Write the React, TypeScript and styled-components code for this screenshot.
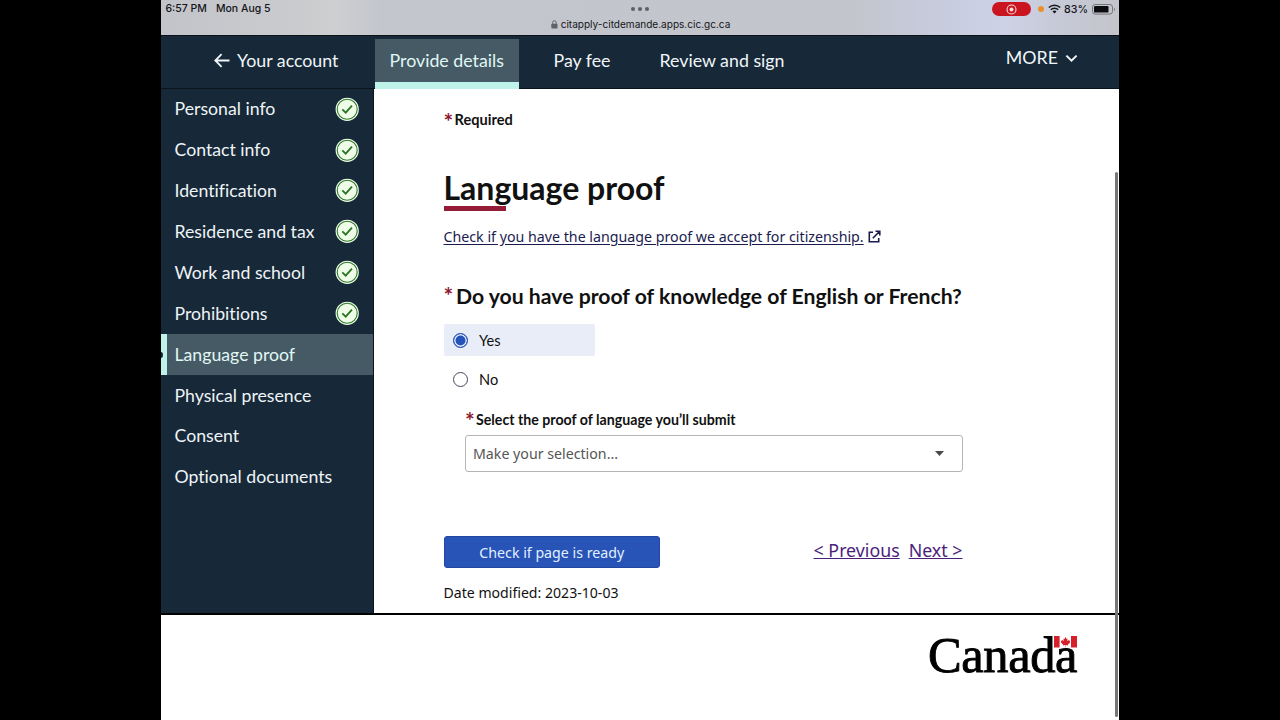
import { useState } from "react";
import styled, { createGlobalStyle } from "styled-components";

const GlobalStyle = createGlobalStyle`
  * {
    box-sizing: border-box;
  }
  body {
    margin: 0;
    background: #000;
    overflow: hidden;
  }
  a {
    color: inherit;
  }
`;

const Screen = styled.div`
  position: relative;
  width: 958px;
  height: 720px;
  margin-left: 161px;
  background: #fff;
  display: flex;
  flex-direction: column;
  overflow: hidden;
  font-family: "Noto Sans", sans-serif;
  color: #111;
`;

const StatusBar = styled.header`
  height: 36px;
  flex: none;
  display: grid;
  grid-template-columns: 1fr auto 1fr;
  background: linear-gradient(90deg, #c3c4c9 0%, #c9cbce 14%, #cdcfd0 18%, #c4c6cd 23%, #c3c5cd 72%, #c8cde0 83%, #cdd2e6 88%, #c6c9d6 94%, #c4c5cb 100%);
  border-bottom: 1px solid #0c1218;
  font-family: Inter, sans-serif;
  color: #15161a;
`;

const Clock = styled.div`
  display: flex;
  gap: 9px;
  padding: 2px 0 0 4.5px;
  font-size: 10.5px;
  line-height: 14px;
  font-weight: 500;
  white-space: nowrap;
`;

const Address = styled.div`
  display: flex;
  flex-direction: column;
  align-items: center;
`;

const Dots = styled.div`
  display: flex;
  gap: 3px;
  height: 16px;
  padding-top: 7px;

  i {
    width: 4px;
    height: 4px;
    border-radius: 50%;
    background: #5e6066;
  }
`;

const Url = styled.div`
  display: flex;
  align-items: center;
  gap: 3px;
  height: 16px;
  padding-left: 1px;
  font-size: 10.05px;
  white-space: nowrap;
`;

const Indicators = styled.div`
  display: flex;
  justify-content: flex-end;
  align-items: center;
  height: 18px;
  padding-right: 3px;
  font-size: 10.7px;
  font-weight: 500;
`;

const RecordPill = styled.span`
  width: 39px;
  height: 14px;
  margin-right: 7px;
  border-radius: 7px;
  background: #ca1420;
  display: flex;
  align-items: center;
  justify-content: center;
`;

const MicDot = styled.span`
  width: 6px;
  height: 6px;
  margin-right: 4px;
  border-radius: 50%;
  background: #e8912d;
`;

const Percent = styled.span`
  margin: 0 4px 0 3px;
`;

const NavBar = styled.nav`
  height: 53px;
  flex: none;
  display: flex;
  background: #172838;
  border-bottom: 1px solid #0b141d;
  color: #f0f6f8;
  font-family: Lato, sans-serif;
  font-size: 17.8px;
  font-variant-ligatures: none;
  line-height: 24px;
  white-space: nowrap;
`;

const BackLink = styled.div`
  width: 213.5px;
  padding: 12px 0 0 53px;
  display: flex;
  gap: 7px;

  svg {
    margin-top: 5px;
  }
`;

const Tab = styled.div<{ $width: number; $active?: boolean }>`
  width: ${(p) => p.$width}px;
  height: 50px;
  margin-top: 3px;
  padding-top: 9px;
  text-align: center;
  color: ${(p) => (p.$active ? "#e0f7f5" : "#f0f6f8")};
  background: ${(p) => (p.$active ? "#455a64" : "none")};
  border-bottom: ${(p) => (p.$active ? "7px solid #bff3e9" : "0")};
`;

const More = styled.div`
  display: flex;
  gap: 7px;
  margin-left: auto;
  padding: 9px 41px 0 0;

  svg {
    margin-top: 9px;
  }
`;

const Body = styled.div`
  height: 524px;
  flex: none;
  display: flex;
`;

const SideMenu = styled.aside`
  width: 212.5px;
  background: #172838;
  border-right: 1px solid #0b141d;
`;

const SideItem = styled.div<{ $active?: boolean }>`
  height: 40.92px;
  padding: 0 13.5px 1.6px ${(p) => (p.$active ? 7.5 : 13.5)}px;
  display: flex;
  align-items: center;
  justify-content: space-between;
  font-family: Lato, sans-serif;
  font-size: 17.7px;
  font-variant-ligatures: none;
  white-space: nowrap;
  color: ${(p) => (p.$active ? "#e0f7f5" : "#eef4f7")};
  background: ${(p) => (p.$active ? "#455a64" : "none")};
  border-left: ${(p) => (p.$active ? "6px solid #bff3e9" : "0")};
`;

const Main = styled.main`
  width: 520px;
  margin-left: 70px;
  padding-top: 19px;
`;

const Required = styled.div<{ $size: number; $height: number; $gap?: number }>`
  display: flex;
  gap: ${(p) => p.$gap ?? 3}px;
  height: ${(p) => p.$height}px;
  line-height: ${(p) => p.$height}px;
  font-family: Lato, sans-serif;
  font-weight: 700;
  font-size: ${(p) => p.$size}px;
  white-space: nowrap;
`;

const Star = styled.span<{ $shift?: number }>`
  width: 8px;
  font-size: 23px;
  color: #8f1734;
  margin-top: ${(p) => p.$shift ?? 0}px;
`;

const Title = styled.h1`
  margin: 35.5px 0 0;
  font-family: Lato, sans-serif;
  font-size: 32px;
  line-height: 39px;
  height: 43px;
  font-weight: 700;
  white-space: nowrap;

  &::after {
    content: "";
    display: block;
    width: 62px;
    height: 5px;
    margin-top: -1px;
    background: #941c38;
  }
`;

const HelpLink = styled.div`
  display: flex;
  align-items: center;
  gap: 4px;
  height: 24px;
  margin: 13.5px 0 34px;
  font-size: 14.23px;
  white-space: nowrap;
  color: #1b1b50;

  a {
    text-underline-offset: 2px;
  }
`;

const Options = styled.div`
  margin-top: 13.5px;
`;

const Option = styled.label<{ $selected: boolean }>`
  display: flex;
  align-items: center;
  gap: 11.5px;
  width: 151px;
  height: 32px;
  margin-bottom: 7px;
  padding: 1px 0 0 9px;
  border-radius: 2px;
  font-family: Lato, sans-serif;
  font-size: 14.6px;
  background: ${(p) => (p.$selected ? "#e8edf8" : "none")};
`;

const Radio = styled.input`
  appearance: none;
  width: 15px;
  height: 15px;
  margin: 0;
  border: 1px solid #444a5c;
  border-radius: 50%;
  background: #fff;

  &:checked {
    border-color: #2450b0;
    background: #2452b8;
    box-shadow: inset 0 0 0 1.5px #e4ebfa;
  }
`;

const SubQuestion = styled.div`
  margin: 14px 0 0 21.5px;
`;

const Select = styled.div`
  display: flex;
  align-items: center;
  justify-content: space-between;
  width: 498px;
  height: 37px;
  margin-top: 4.5px;
  padding: 0 18px 0 7px;
  border: 1px solid #b5b5b5;
  border-radius: 3px;
  font-size: 14.2px;
  color: #555;
`;

const Actions = styled.div`
  display: flex;
  justify-content: space-between;
  width: 519px;
  height: 32px;
  margin-top: 64px;
`;

const CheckButton = styled.button`
  width: 216.5px;
  height: 32px;
  padding: 0;
  border: 1px solid #2347a0;
  border-radius: 3px;
  background: #2853b7;
  color: #e0f1ff;
  font: 14.2px "Noto Sans", sans-serif;
`;

const Pager = styled.div`
  display: flex;
  gap: 9px;
  font-size: 17.8px;
  line-height: 28px;
  color: #4c1e7c;
`;

const Modified = styled.div`
  margin-top: 15px;
  font-size: 14.1px;
  line-height: 20px;
`;

const Footer = styled.footer`
  flex: 1;
  border-top: 2px solid #000;
  padding: 16.5px 42px 0 0;
  display: flex;
  justify-content: flex-end;
`;

const Wordmark = styled.div`
  position: relative;
  width: 149px;
  height: 46px;
  font-family: "Liberation Serif", serif;
  font-size: 50.5px;
  line-height: 46px;
  letter-spacing: -0.4px;
  color: #000;
  -webkit-text-stroke: 0.9px #000;
`;

const Flag = styled.svg`
  position: absolute;
  right: 0;
  top: 4.5px;
  background: #fff;
`;

const ScrollThumb = styled.div`
  position: absolute;
  left: 953.5px;
  top: 172px;
  width: 3px;
  height: 545px;
  border-radius: 2px;
  background: #77777a;
`;

const Notch = styled.div`
  position: absolute;
  left: -2px;
  top: 352px;
  width: 4px;
  height: 6px;
  border-radius: 50%;
  background: #172838;
`;

const steps = [
  { label: "Personal info", done: true },
  { label: "Contact info", done: true },
  { label: "Identification", done: true },
  { label: "Residence and tax", done: true },
  { label: "Work and school", done: true },
  { label: "Prohibitions", done: true },
  { label: "Language proof", active: true },
  { label: "Physical presence" },
  { label: "Consent" },
  { label: "Optional documents" },
];

const CheckBadge = () => (
  <svg width="24" height="24" viewBox="0 0 24 24" fill="none">
    <circle cx="12.2" cy="12.3" r="11.6" fill="#effce8" />
    <circle cx="12.2" cy="12.3" r="10" stroke="#2e7a2b" strokeWidth="1.1" />
    <path d="M7.3 12.4l3.4 3.3 6.3-7" stroke="#2a7424" strokeWidth="1.8" />
  </svg>
);

const Lock = () => (
  <svg width="7" height="9" viewBox="0 0 7 9" fill="none">
    <rect x="0.3" y="3.7" width="6.2" height="4.8" rx="0.8" fill="#606269" />
    <path d="M1.7 4V2.4a1.7 1.7 0 013.4 0V4" stroke="#606269" />
  </svg>
);

const Wifi = () => (
  <svg width="13" height="10" viewBox="0 0 13 10" fill="none" stroke="#15161a" strokeWidth="1.6">
    <path d="M0.8 3.5a8.2 8.2 0 0111.4 0M2.8 5.7a5.3 5.3 0 017.4 0" />
    <path d="M6.5 9.6L4.5 7.5a2.9 2.9 0 014 0z" fill="#15161a" stroke="none" />
  </svg>
);

const Battery = () => (
  <svg width="24" height="11" viewBox="0 0 24 11" fill="none">
    <rect x="0.5" y="0.5" width="20" height="9.6" rx="2.6" stroke="#74757a" />
    <rect x="2" y="2" width="14.5" height="6.6" rx="1.2" fill="#0c0c0e" />
    <path d="M22 3.7c1.3.4 1.3 2.8 0 3.2z" fill="#74757a" />
  </svg>
);

const App = () => {
  const [proof, setProof] = useState("Yes");

  return (
    <>
      <GlobalStyle />
      <Screen>
        <StatusBar>
          <Clock>
            <span>6:57 PM</span>
            <span>Mon Aug 5</span>
          </Clock>
          <Address>
            <Dots>
              <i />
              <i />
              <i />
            </Dots>
            <Url>
              <Lock />
              citapply-citdemande.apps.cic.gc.ca
            </Url>
          </Address>
          <Indicators>
            <RecordPill>
              <svg width="11" height="11" viewBox="0 0 11 11" fill="none">
                <circle cx="5.5" cy="5.5" r="4.5" stroke="#fbdcdc" strokeWidth="1.1" />
                <circle cx="5.5" cy="5.5" r="2" fill="#fbdcdc" />
              </svg>
            </RecordPill>
            <MicDot />
            <Wifi />
            <Percent>83%</Percent>
            <Battery />
          </Indicators>
        </StatusBar>

        <NavBar>
          <BackLink>
            <svg width="16" height="15" viewBox="0 0 16 15" fill="none" stroke="#f0f6f8" strokeWidth="1.8">
              <path d="M15.5 7.5H1.5M7.6 1.2L1.3 7.5l6.3 6.3" />
            </svg>
            Your account
          </BackLink>
          <Tab $width={144.5} $active>Provide details</Tab>
          <Tab $width={126}>Pay fee</Tab>
          <Tab $width={154}>Review and sign</Tab>
          <More>
            MORE
            <svg width="13" height="9" viewBox="0 0 13 9" fill="none" stroke="#f0f6f8" strokeWidth="2">
              <path d="M1.4 1.6l5.1 5 5.1-5" />
            </svg>
          </More>
        </NavBar>

        <Body>
          <SideMenu>
            {steps.map((step) => (
              <SideItem key={step.label} $active={step.active}>
                {step.label}
                {step.done && <CheckBadge />}
              </SideItem>
            ))}
          </SideMenu>

          <Main>
            <Required $size={14.6} $height={24}>
              <Star $shift={1}>*</Star>
              <span>Required</span>
            </Required>
            <Title>Language proof</Title>
            <HelpLink>
              <a href="#proof">Check if you have the language proof we accept for citizenship.</a>
              <svg width="13" height="13" viewBox="0 0 13 13" fill="none" stroke="#1b1b50" strokeWidth="1.6">
                <path d="M5 2.2H1.3v9.5h9.4V8M4.8 8.2l6.4-6.4M7.5 1.2h4.3v4.3" />
              </svg>
            </HelpLink>

            <Required $size={21.2} $height={28} $gap={4.5}>
              <Star $shift={-1.5}>*</Star>
              <span>Do you have proof of knowledge of English or French?</span>
            </Required>
            <Options>
              {["Yes", "No"].map((value) => (
                <Option key={value} $selected={proof === value}>
                  <Radio
                    type="radio"
                    name="proof"
                    checked={proof === value}
                    onChange={() => setProof(value)}
                  />
                  {value}
                </Option>
              ))}
            </Options>

            <SubQuestion>
              <Required $size={14.2} $height={22}>
                <Star>*</Star>
                <span>Select the proof of language you’ll submit</span>
              </Required>
              <Select>
                Make your selection...
                <svg width="9" height="5" viewBox="0 0 9 5">
                  <path d="M0 0h9L4.5 5z" fill="#4a4a4a" />
                </svg>
              </Select>
            </SubQuestion>

            <Actions>
              <CheckButton>Check if page is ready</CheckButton>
              <Pager>
                <a href="#previous">&lt; Previous</a>
                <a href="#next">Next &gt;</a>
              </Pager>
            </Actions>
            <Modified>Date modified: 2023-10-03</Modified>
          </Main>
        </Body>

        <Footer>
          <Wordmark>
            Canada
            <Flag width="23" height="12" viewBox="0 0 23 12">
              <path d="M0 0h5.6v11.5H0zM17 0h6v11.5h-6z" fill="#d5202c" />
              <path
                d="M11.5 1l1.1 2 1-.5-.4 2.6 1.5-1.2.3.8 1.2-.1-.5 1.6.6.4-2.4 2 .3.8-2.5-.3v2.2h-.4V9.1l-2.5.3.3-.8-2.4-2 .6-.4-.5-1.6 1.2.1.3-.8 1.5 1.2-.4-2.6 1 .5z"
                fill="#d5202c"
              />
            </Flag>
          </Wordmark>
        </Footer>

        <Notch />
        <ScrollThumb />
      </Screen>
    </>
  );
};

export default App;
